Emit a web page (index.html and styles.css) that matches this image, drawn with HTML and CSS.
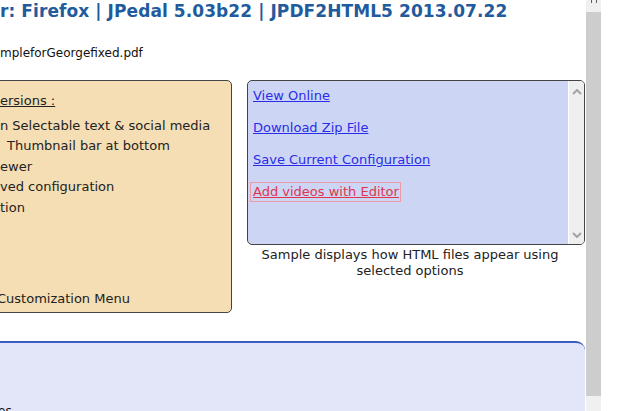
FILE: index.html
```html
<!DOCTYPE html>
<html lang="en">
<head>
  <meta charset="UTF-8">
  <title>JPDF2HTML5 Online Converter</title>
  <link rel="stylesheet" href="styles.css">
</head>
<body>
  <div class="window">
    <div class="page">
      <h1>r: Firefox | JPedal 5.03b22 | JPDF2HTML5 2013.07.22</h1>
      <p class="file">mpleforGeorgefixed.pdf</p>

      <div class="row">
        <div class="samples">
          <p class="samples-title">ersions :</p>
          <ul class="samples-list">
            <li>n Selectable text &amp; social media</li>
            <li class="indent">Thumbnail bar at bottom</li>
            <li>ewer</li>
            <li>ved configuration</li>
            <li>tion</li>
          </ul>
          <p class="samples-menu">Customization Menu</p>
        </div>

        <div class="output">
          <div class="output-box">
            <div class="links">
              <a href="#">View Online</a>
              <a href="#">Download Zip File</a>
              <a href="#">Save Current Configuration</a>
              <a href="#" class="editor">Add videos with Editor</a>
            </div>
            <div class="inner-scroll">
              <svg width="10" height="6" viewBox="0 0 10 6"><polyline points="1,5 5,1 9,5" fill="none" stroke="#a3a3a3" stroke-width="2"/></svg>
              <svg width="10" height="6" viewBox="0 0 10 6"><polyline points="1,1 5,5 9,1" fill="none" stroke="#a3a3a3" stroke-width="2"/></svg>
            </div>
          </div>
          <p class="caption">Sample displays how HTML files appear using<br>selected options</p>
        </div>
      </div>

      <div class="panel">
        <p class="panel-text">es</p>
      </div>
    </div>

    <div class="vscroll">
      <div class="vscroll-top">
        <svg width="10" height="4" viewBox="0 0 10 4"><line x1="2.5" y1="0" x2="2.5" y2="3" stroke="#606060"/><line x1="7.5" y1="0" x2="7.5" y2="3" stroke="#606060"/></svg>
      </div>
      <div class="vscroll-thumb"></div>
    </div>
  </div>
</body>
</html>
```

FILE: styles.css
```css
:root {
  --title: #1f5b9d;
  --tan: #f5deb3;
  --blue-box: #ccd6f4;
  --panel: #e3e6f8;
  --text: #222222;
  --link: #2b2bea;
}

* {
  box-sizing: border-box;
}

body {
  margin: 0;
  background: #ffffff;
  color: var(--text);
  font-family: "DejaVu Sans", Verdana, sans-serif;
  font-size: 13px;
  overflow: hidden;
}

.window {
  display: flex;
  height: 411px;
  overflow: hidden;
}

.page {
  width: 585px;
  flex-shrink: 0;
  overflow: hidden;
  margin-right: 1px;
}

h1 {
  margin: 0;
  padding-top: 1px;
  font-size: 17px;
  letter-spacing: 0.08px;
  line-height: 20px;
  color: var(--title);
  white-space: nowrap;
}

.file {
  margin: 24px 0 0;
  font-size: 12px;
  line-height: 16px;
  color: #111111;
}

.row {
  display: flex;
  gap: 15px;
  margin-top: 19px;
}

/* tan box with sample list */
.samples {
  width: 242px;
  height: 233px;
  margin-left: -10px;
  padding: 11px 0 0 9px;
  background: var(--tan);
  border: 1px solid #444444;
  border-radius: 5px;
  white-space: nowrap;
}

.samples-title {
  margin: 0;
  line-height: 18px;
  text-decoration: underline;
}

.samples-list {
  list-style: none;
  margin: 6px 0 0;
  padding: 0;
}

.samples-list li {
  line-height: 20.4px;
}

.samples-list li.indent {
  padding-left: 7px;
}

.samples-menu {
  margin: 71px 0 0 -3px;
  line-height: 20px;
}

/* blue output box */
.output {
  flex: 1;
}

.output-box {
  display: flex;
  height: 165px;
  background: var(--blue-box);
  border: 1px solid #444444;
  border-radius: 5px;
  overflow: hidden;
}

.links {
  flex: 1;
  display: flex;
  flex-direction: column;
  align-items: flex-start;
  gap: 16px;
  padding: 7px 0 0 5px;
}

.links a {
  color: var(--link);
  line-height: 16px;
}

.links a.editor {
  color: #e0354d;
  outline: 1px solid #ef9aa8;
  outline-offset: 1px;
  margin-left: -1px;
  padding-left: 1px;
}

.inner-scroll {
  width: 16px;
  display: flex;
  flex-direction: column;
  justify-content: space-between;
  align-items: center;
  padding: 8px 0 6px;
  background: #efefef;
  border-left: 1px solid #ffffff;
}

.caption {
  margin: 2px 0 0;
  padding-right: 12px;
  text-align: center;
  line-height: 16px;
  color: #222222;
}

/* lower panel */
.panel {
  margin: 28px 0 0 -20px;
  height: 90px;
  background: var(--panel);
  border-top: 2px solid #3b5cc0;
  border-top-right-radius: 9px;
}

.panel-text {
  margin: 61px 0 0 18px;
  font-size: 12px;
  color: #111111;
}

/* page scrollbar */
.vscroll {
  width: 15px;
  flex-shrink: 0;
  display: flex;
  flex-direction: column;
  background: #f0f0f0;
}

.vscroll-top {
  height: 12px;
  display: flex;
  justify-content: center;
}

.vscroll-thumb {
  height: 384px;
  background: #cdcdcd;
}
```
